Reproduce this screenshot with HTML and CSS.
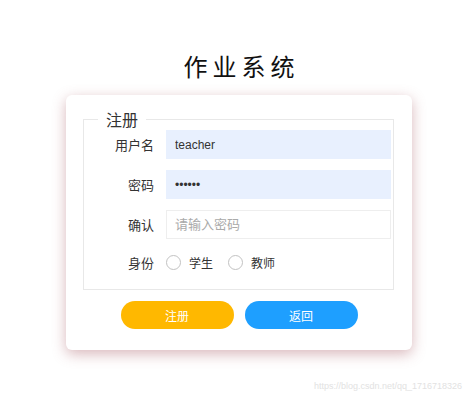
FILE: index.html
```html
<!DOCTYPE html>
<html lang="zh-CN">
<head>
<meta charset="utf-8">
<title>作业系统</title>
<link rel="stylesheet" href="styles.css">
</head>
<body>
<div class="wrap">
  <h1 class="title">作业系统</h1>
  <div class="card">
    <fieldset class="field">
      <legend class="legend">注册</legend>
      <div class="row">
        <label class="label">用户名</label>
        <input class="input filled" type="text" value="teacher">
      </div>
      <div class="row">
        <label class="label">密码</label>
        <input class="input filled" type="password" value="123456">
      </div>
      <div class="row">
        <label class="label">确认</label>
        <input class="input" type="password" placeholder="请输入密码">
      </div>
      <div class="row radio-row">
        <label class="label">身份</label>
        <div class="radios">
          <span class="radio"><span class="circle"></span><span class="rtext">学生</span></span>
          <span class="radio"><span class="circle"></span><span class="rtext">教师</span></span>
        </div>
      </div>
    </fieldset>
    <div class="buttons">
      <button class="btn warm">注册</button>
      <button class="btn blue">返回</button>
    </div>
  </div>
</div>
<div class="watermark">https://blog.csdn.net/qq_1716718326</div>
</body>
</html>
```

FILE: styles.css
```css
html, body {
  margin: 0;
  padding: 0;
  background: #ffffff;
}
body {
  font-family: "Liberation Sans", "Noto Sans CJK SC", sans-serif;
  color: #333;
}
.wrap {
  width: 346px;
  margin-left: 66px;
  padding-top: 50px;
}
.title {
  margin: 0;
  height: 32px;
  font-family: "Noto Sans CJK SC", sans-serif;
  font-size: 24px;
  line-height: 32px;
  font-weight: 400;
  letter-spacing: 5px;
  padding-left: 5px;
  text-align: center;
  color: #111;
}
.card {
  margin-top: 13px;
  box-sizing: border-box;
  width: 346px;
  height: 255px;
  background: #fff;
  border-radius: 6px;
  box-shadow: 0 4px 14px rgba(170, 95, 105, 0.45);
  padding: 14px 18px 0 17px;
}
.field {
  margin: 0;
  padding: 0 0 12px 0;
  border: 1px solid #e8e8e8;
  min-inline-size: 0;
}
.legend {
  margin-left: 14px;
  padding: 0 8px;
  font-family: "Noto Sans CJK SC", sans-serif;
  font-size: 16px;
  line-height: 20px;
  color: #333;
}
.row {
  display: flex;
  align-items: center;
  height: 29px;
  margin-top: 11px;
}
.row:first-of-type {
  margin-top: 1px;
}
.row.radio-row {
  margin-top: 9px;
}
.label {
  width: 60px;
  margin-left: 10px;
  margin-right: 12px;
  text-align: right;
  font-family: "Noto Sans CJK SC", sans-serif;
  font-size: 13px;
  color: #333;
}
.input {
  box-sizing: border-box;
  width: 225px;
  height: 29px;
  margin: 0;
  padding: 0 8px;
  border: 1px solid #eeeeee;
  background: #fff;
  font-family: "Liberation Sans", "Noto Sans CJK SC", sans-serif;
  font-size: 12px;
  color: #333;
  outline: none;
}
.input.filled {
  background: #e8f0fe;
  border-color: #e8f0fe;
}
.input::placeholder {
  font-family: "Noto Sans CJK SC", sans-serif;
  font-size: 13px;
  color: #aaa;
}
.radios {
  display: flex;
  align-items: center;
  gap: 15px;
}
.radio {
  display: flex;
  align-items: center;
  gap: 8px;
}
.circle {
  box-sizing: border-box;
  width: 15px;
  height: 15px;
  border: 1px solid #c2c2c2;
  border-radius: 50%;
}
.rtext {
  font-family: "Noto Sans CJK SC", sans-serif;
  font-size: 12px;
  color: #333;
}
.buttons {
  display: flex;
  justify-content: center;
  gap: 11px;
  margin-top: 11px;
  padding-left: 1px;
}
.btn {
  width: 113px;
  height: 28px;
  border: none;
  border-radius: 14px;
  color: #fff;
  font-family: "Noto Sans CJK SC", sans-serif;
  font-size: 12px;
  padding: 0;
}
.btn.warm {
  background: #ffb800;
}
.btn.blue {
  background: #1e9fff;
}
.watermark {
  margin-top: 30px;
  padding-right: 12px;
  text-align: right;
  font-family: "Liberation Sans", sans-serif;
  font-size: 9px;
  line-height: 12px;
  color: #e2e2e2;
}
```
